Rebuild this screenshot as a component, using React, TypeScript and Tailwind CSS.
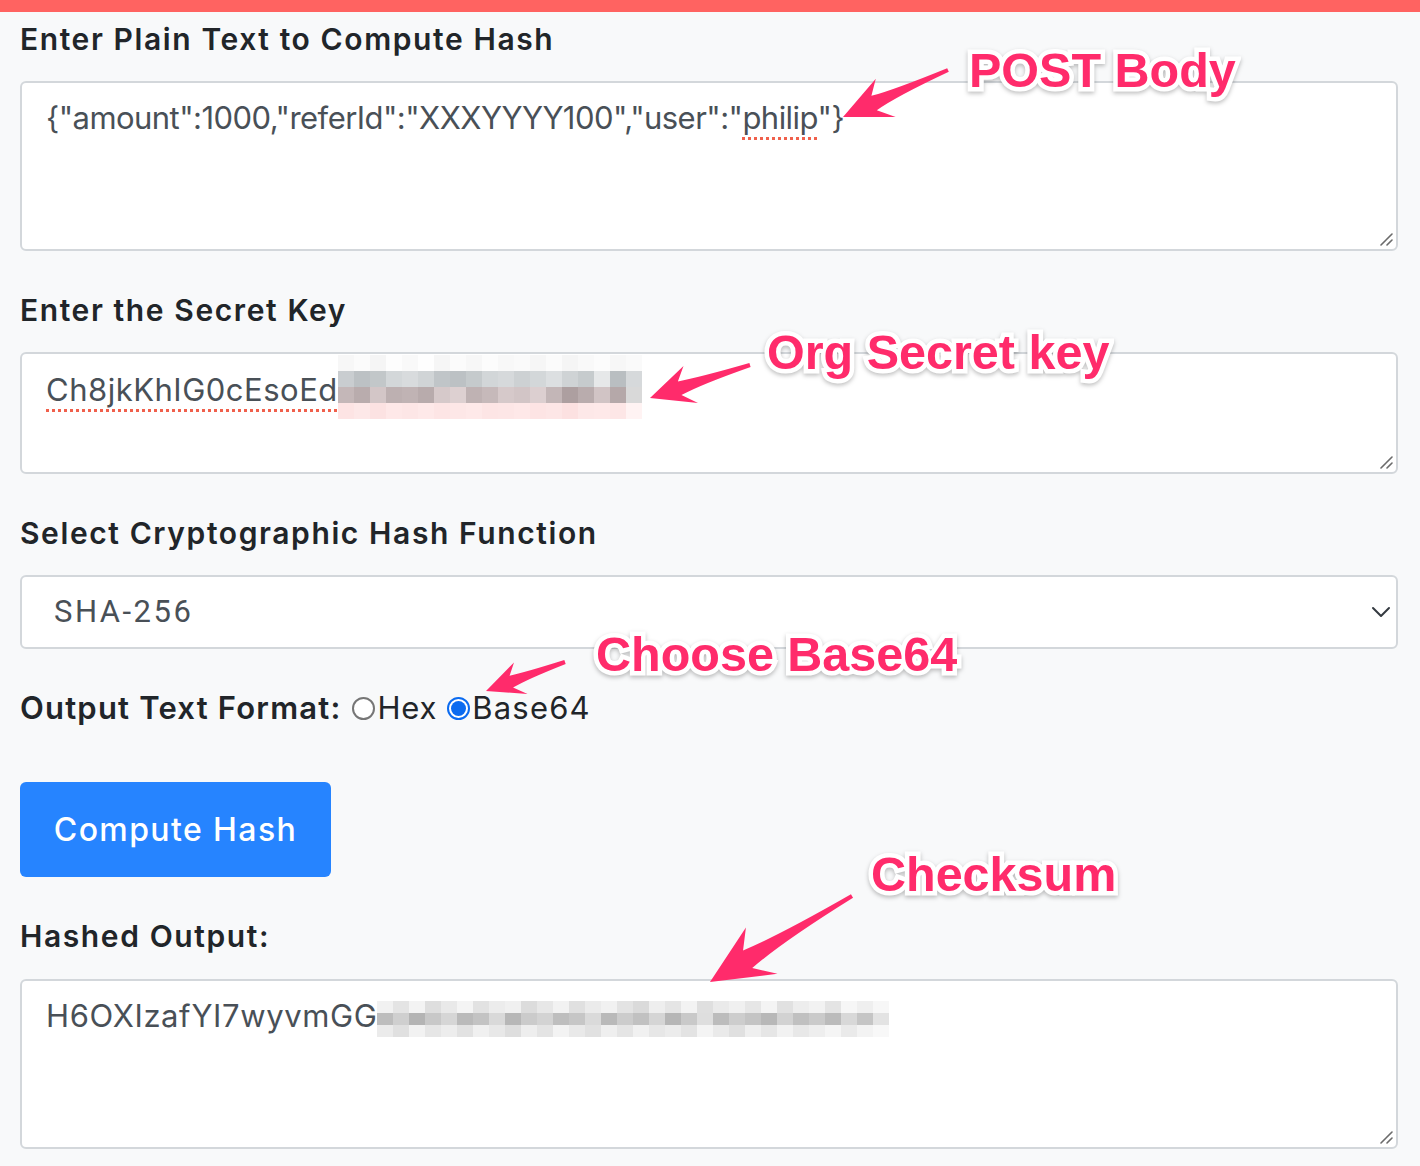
const keyBlur = [
  ["#f7f7f7", "#fbfbfb", "#f5f5f5", "#fdfdfd", "#f9f9f9", "#fefefe", "#f6f6f6", "#fbfbfb", "#f7f7f7", "#fcfcfc", "#f8f8f8", "#fafafa", "#f6f6f6", "#fbfbfb", "#f5f5f5", "#f9f9f9", "#fcfcfc", "#f7f7f7", "#fafafa"],
  ["#c9cdd0", "#bcc1c4", "#c2c7c9", "#d3d7d9", "#d8dbdd", "#d0d4d6", "#c0c5c8", "#bcc1c4", "#c5cacc", "#d2d6d8", "#d6d9db", "#cdd1d3", "#d3d7d9", "#dcdfe1", "#cfd3d5", "#c6cbcd", "#e6e8e9", "#b9bec1", "#d6d9db"],
  ["#c4b7b8", "#b9acad", "#d3c6c7", "#bdb0b1", "#c0b3b4", "#b8abac", "#d6c9ca", "#ddd0d1", "#bfb2b3", "#c6b9ba", "#d6c9ca", "#d2c5c6", "#dccfd0", "#c3b6b7", "#ad9fa0", "#b9acad", "#d1c4c5", "#b5a8a9", "#d9d9d9"],
  ["#fde4e4", "#fde8e8", "#fce2e2", "#fee8e8", "#fde6e6", "#fee9e9", "#fde5e5", "#fde7e7", "#fee9e9", "#fde5e5", "#fde6e6", "#fee8e8", "#fde4e4", "#fde6e6", "#fce1e1", "#fde8e8", "#fee9e9", "#fde6e6", "#fff3f3"],
];

const hashBlur = [
  ["#f1f1f1", "#e4e4e4", "#f3f3f3", "#dedede", "#e9e9e9", "#f4f4f4", "#e2e2e2", "#ececec", "#f0f0f0", "#dcdcdc", "#e7e7e7", "#f2f2f2", "#e0e0e0", "#ebebeb", "#f1f1f1", "#e3e3e3", "#dadada", "#eeeeee", "#e5e5e5", "#f3f3f3", "#dfdfdf", "#eaeaea", "#f0f0f0", "#e6e6e6", "#f4f4f4", "#e1e1e1", "#ededed", "#f2f2f2", "#e4e4e4", "#f6f6f6", "#efefef", "#f7f7f7"],
  ["#bdbdbd", "#cfcfcf", "#b4b4b4", "#c8c8c8", "#d6d6d6", "#bababa", "#c3c3c3", "#d9d9d9", "#b7b7b7", "#cbcbcb", "#d3d3d3", "#bebebe", "#c6c6c6", "#dadada", "#b9b9b9", "#cccccc", "#c1c1c1", "#d5d5d5", "#b6b6b6", "#c9c9c9", "#dedede", "#bcbcbc", "#cdcdcd", "#c4c4c4", "#b8b8b8", "#d2d2d2", "#c0c0c0", "#cacaca", "#bbbbbb", "#d8d8d8", "#c5c5c5", "#e3e3e3"],
  ["#ebebeb", "#e0e0e0", "#f2f2f2", "#e6e6e6", "#ededed", "#e2e2e2", "#f0f0f0", "#e8e8e8", "#dedede", "#eeeeee", "#e4e4e4", "#f3f3f3", "#e9e9e9", "#e1e1e1", "#efefef", "#e5e5e5", "#f1f1f1", "#e7e7e7", "#ececec", "#e3e3e3", "#f4f4f4", "#eaeaea", "#e0e0e0", "#efefef", "#e6e6e6", "#f2f2f2", "#e8e8e8", "#eeeeee", "#f5f5f5", "#eaeaea", "#f3f3f3", "#f8f8f8"],
];

function Pixels({ rows, cell, rowH }: { rows: string[][]; cell: number; rowH: number }) {
  return (
    <span className="inline-flex flex-col align-middle">
      {rows.map((row, i) => (
        <span key={i} className="flex">
          {row.map((c, j) => (
            <span key={j} style={{ background: c, width: cell, height: rowH }} />
          ))}
        </span>
      ))}
    </span>
  );
}

function Grip() {
  return (
    <svg className="absolute bottom-[3px] right-[3px]" width="14" height="14" viewBox="0 0 14 14">
      <path d="M2 13 L13 2 M8 13 L13 8" stroke="#6b6b6b" strokeWidth="1.6" strokeLinecap="round" />
    </svg>
  );
}

function Label({ children, className = "" }: { children: React.ReactNode; className?: string }) {
  return (
    <div className={`h-[36px] text-[30px] font-semibold leading-[36px] tracking-[1.6px] text-[#212529] ${className}`}>
      {children}
    </div>
  );
}

function Arrow({ x1, y1, x2, y2, head }: { x1: number; y1: number; x2: number; y2: number; head: number }) {
  const dx = x2 - x1;
  const dy = y2 - y1;
  const len = Math.sqrt(dx * dx + dy * dy);
  const ang = (Math.atan2(dy, dx) * 180) / Math.PI;
  const h = head;
  const d = `M0 -2 Q ${len * 0.5} -3 ${len - h * 0.7} -${h * 0.16} L ${len - h} -${h * 0.45} L ${len} 0 L ${len - h * 0.95} ${h * 0.45} L ${len - h * 0.72} ${h * 0.16} Q ${len * 0.5} 4 0 2 Z`;
  return <path d={d} fill="#ff2b6b" transform={`translate(${x1} ${y1}) rotate(${ang})`} />;
}

function Note({ text, className }: { text: string; className: string }) {
  return (
    <div
      className={`absolute whitespace-nowrap font-['Liberation_Sans',Arial,sans-serif] text-[48.5px] font-bold leading-none text-[#ff2b6b] [-webkit-text-stroke:9px_white] [paint-order:stroke_fill] drop-shadow-[0_2px_2px_rgba(0,0,0,0.25)] ${className}`}
    >
      {text}
    </div>
  );
}

export default function App() {
  return (
    <div className="relative min-h-[1166px] w-[1420px] overflow-hidden bg-[#f8f9fa] font-['Inter','Open_Sans',sans-serif]">
      <div className="h-[12px] bg-[#ff6361]" />

      <div className="px-[20px]">
        <Label className="mt-[9px]">Enter Plain Text to Compute Hash</Label>
        <div className="relative mt-[24px] h-[170px] w-[1378px] rounded-[6px] border-2 border-[#d3d7db] bg-white pl-[24px] pt-[12px] text-[31px] leading-[46px] tracking-[-0.55px] text-[#495057]">
          {'{"amount":1000,"referId":"XXXYYYY100","user":"'}
          <span className="underline decoration-[#f0604c] decoration-dotted decoration-[3px] underline-offset-[8px]">philip</span>
          {'"}'}
          <Grip />
        </div>

        <Label className="mt-[41px]">Enter the Secret Key</Label>
        <div className="relative mt-[24px] flex h-[122px] w-[1378px] items-start rounded-[6px] border-2 border-[#d3d7db] bg-white pl-[24px] pt-[1px] text-[31px] text-[#495057]">
          <span className="mt-[12px] leading-[46px] tracking-[0.5px] underline decoration-[#f0604c] decoration-dotted decoration-[3px] underline-offset-[8px]">Ch8jkKhIG0cEsoEd</span>
          <Pixels rows={keyBlur} cell={16} rowH={16} />
          <Grip />
        </div>

        <Label className="mt-[41px]">Select Cryptographic Hash Function</Label>
        <div className="mt-[24px] flex h-[74px] w-[1378px] items-center justify-between rounded-[6px] border-2 border-[#d3d7db] bg-white pl-[32px] pr-[5px]">
          <span className="font-['Roboto',sans-serif] text-[31px] tracking-[2.5px] text-[#495057]">SHA-256</span>
          <svg width="20" height="12" viewBox="0 0 20 12">
            <path d="M2 2 L10 10 L18 2" fill="none" stroke="#343a40" strokeWidth="2" strokeLinecap="round" strokeLinejoin="round" />
          </svg>
        </div>

        <div className="mt-[41px] flex h-[36px] items-center text-[31px] text-[#212529]">
          <span className="font-semibold tracking-[1.2px]">Output Text Format:</span>
          <span className="ml-[10px] h-[23px] w-[23px] rounded-full border-2 border-[#767676] bg-white" />
          <span className="ml-[3px] tracking-[0.8px]">Hex</span>
          <span className="ml-[10px] flex h-[23px] w-[23px] items-center justify-center rounded-full border-2 border-[#0b6bf0] bg-white">
            <span className="h-[15px] w-[15px] rounded-full bg-[#0b6bf0]" />
          </span>
          <span className="ml-[2px] tracking-[1.2px]">Base64</span>
        </div>

        <button
          type="button"
          className="mt-[56px] flex h-[95px] w-[311px] items-center justify-center rounded-[6px] bg-[#2684ff] text-[32px] font-medium tracking-[1.4px] text-white"
        >
          Compute Hash
        </button>

        <Label className="mt-[41px]">Hashed Output:</Label>
        <div className="relative mt-[25px] flex h-[170px] w-[1378px] items-start rounded-[6px] border-2 border-[#d3d7db] bg-white pl-[24px] text-[31px] text-[#495057]">
          <span className="mt-[12px] leading-[46px] tracking-[0.6px]">H6OXIzafYI7wyvmGG</span>
          <span className="mt-[12px]">
            <Pixels rows={hashBlur} cell={16} rowH={12} />
          </span>
          <Grip />
        </div>
      </div>

      <svg className="pointer-events-none absolute left-0 top-0" width="1420" height="1166">
        <Arrow x1={948} y1={70} x2={843} y2={117} head={48} />
        <Arrow x1={750} y1={365} x2={650} y2={398} head={44} />
        <Arrow x1={565} y1={662} x2={486} y2={691} head={38} />
        <Arrow x1={852} y1={896} x2={710} y2={982} head={62} />
      </svg>

      <Note text="POST Body" className="left-[969px] top-[46px]" />
      <Note text="Org Secret key" className="left-[767px] top-[328px]" />
      <Note text="Choose Base64" className="left-[596px] top-[630px]" />
      <Note text="Checksum" className="left-[871px] top-[850px]" />
    </div>
  );
}
